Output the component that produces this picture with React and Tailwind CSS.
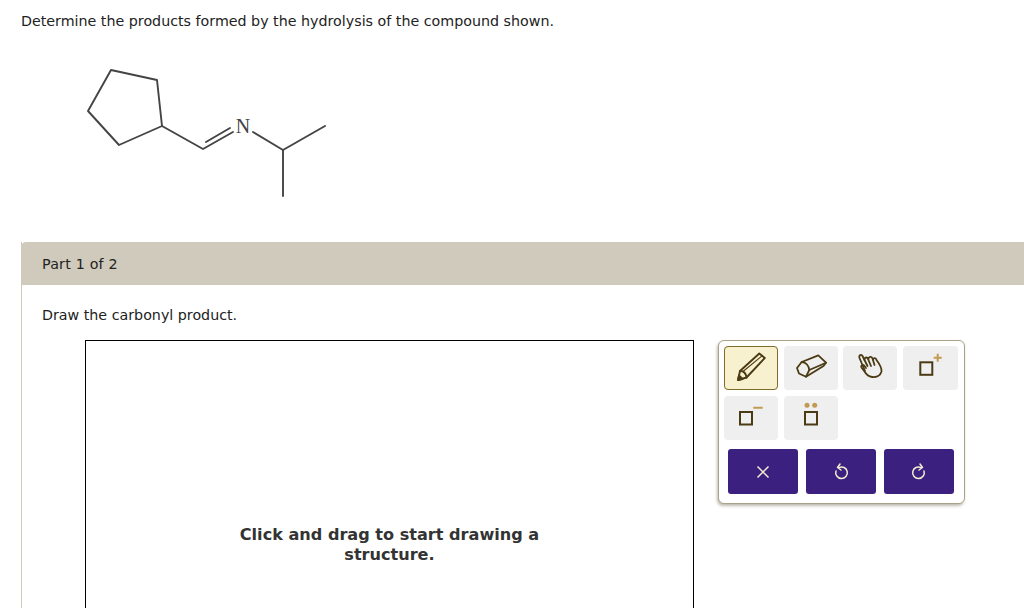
import React from 'react'

const ink = '#4b3b14'
const gold = '#c39a52'
const cream = '#f5ecd0'

function Molecule() {
  return (
    <svg width="260" height="150" viewBox="70 55 260 150" className="block">
      <g fill="none" stroke="#444" strokeWidth="1.900" strokeLinecap="round" strokeLinejoin="round">
        <path d="M111 70 157 80 162 126 119 145 88 111Z" />
        <path d="M162 126 203 149 233 132" />
        <path d="M206 142 230 128" />
        <path d="M253 132 283 150 325 126" />
        <path d="M283 150V196" />
      </g>
      <text x="243" y="133" textAnchor="middle" fontSize="20" fill="#444" fontFamily="'Liberation Serif', serif">N</text>
    </svg>
  )
}

// icons are drawn in page coordinates, the viewBox is the button's own box
const tools = [
  {
    id: 'pencil',
    active: true,
    box: '724 346 54 44',
    icon: (
      <g fill="none" stroke={ink} strokeWidth="1.900" strokeLinejoin="round" strokeLinecap="round">
        <path d="M738 380 740 371 759.300 353.500 764.800 358 746.500 377.500Z" />
        <path d="M740 371C743 371 746 373 746.500 377.500" />
        <path d="M743 371.500 762 355.800" strokeWidth="1.100" />
        <path d="M738 380 739 375.500 742.500 379Z" fill={ink} />
      </g>
    ),
  },
  {
    id: 'eraser',
    box: '784 346 54 44',
    icon: (
      <g fill="none" stroke={ink} strokeWidth="1.800" strokeLinejoin="round" strokeLinecap="round">
        <path d="M797 368 801.700 362 818.300 355.300 826 362.700 823.500 366 806 376.700 799 373.500Z" />
        <path d="M801.700 362C806 362 809 366 809.300 370L806 376.700" />
        <path d="M809.300 370 826 362.700" />
      </g>
    ),
  },
  {
    id: 'hand',
    box: '844 346 54 44',
    icon: (
      <g fill="none" stroke={ink} strokeWidth="1.800" strokeLinejoin="round" strokeLinecap="round">
        <path d="M866 371 860.500 358C859.500 355 862.500 354 863.500 356L868.500 366" />
        <path d="M865.500 360C865 357.500 868 356.500 869 359L872 366" />
        <path d="M869.500 359C869.500 356.500 872.500 356 873.500 358.500L875.500 365" />
        <path d="M874 359.500C874.500 357.500 877 357.500 877.500 360C880.500 364 883 368 882.500 371.500C881.500 375.500 877.500 377.500 873 377C869 376.500 867 374 865.500 371.500L862.500 367.500C861.500 365.500 863.500 364 865.500 366L867 368" />
      </g>
    ),
  },
  {
    id: 'plus',
    box: '903 346 55 44',
    icon: (
      <>
        <rect x="920.300" y="362.300" width="12" height="12.500" fill="none" stroke={ink} strokeWidth="2" />
        <path d="M933.700 357.700H941.700M937.700 353.700V361.700" stroke={gold} strokeWidth="2" />
      </>
    ),
  },
  {
    id: 'minus',
    box: '724 396 54 44',
    icon: (
      <>
        <rect x="740" y="412" width="12" height="12.500" fill="none" stroke={ink} strokeWidth="2" />
        <path d="M753.300 407.700H762.700" stroke={gold} strokeWidth="2" />
      </>
    ),
  },
  {
    id: 'lone-pair',
    box: '784 396 54 44',
    icon: (
      <>
        <rect x="805" y="412" width="12" height="12.500" fill="none" stroke={ink} strokeWidth="2" />
        <circle cx="807" cy="405.300" r="2.500" fill={gold} />
        <circle cx="814.700" cy="405.300" r="2.500" fill={gold} />
      </>
    ),
  },
]

const actions = [
  {
    id: 'clear',
    icon: (
      <svg width="16" height="16" viewBox="0 0 16 16" fill="none" stroke={cream} strokeWidth="1.500">
        <path d="M2.500 2.500 13.500 13.500M13.500 2.500 2.500 13.500" />
      </svg>
    ),
  },
  {
    id: 'undo',
    icon: (
      <svg width="16" height="18" viewBox="0 0 16 18" fill="none" stroke={cream} strokeWidth="1.500" strokeLinecap="round" strokeLinejoin="round">
        <path d="M6 4.500A5.800 5.800 0 1 1 3 8" />
        <path d="M7 1 4.500 4.500 8 7" />
      </svg>
    ),
  },
  {
    id: 'redo',
    icon: (
      <svg width="16" height="18" viewBox="0 0 16 18" fill="none" stroke={cream} strokeWidth="1.500" strokeLinecap="round" strokeLinejoin="round">
        <path d="M10 4.500A5.800 5.800 0 1 0 13 8" />
        <path d="M9 1 11.500 4.500 8 7" />
      </svg>
    ),
  },
]

function ToolPanel() {
  return (
    <div className="w-[247px] h-[164px] shrink-0 rounded-md border border-[#a8a288] bg-white shadow-[-1px_2px_3px_rgba(90,85,60,0.4)] p-[5px]">
      <div className="grid grid-cols-[54px_54px_54px_55px] gap-x-[5.500px] gap-y-[6px]">
        {tools.map((t) => (
          <button
            key={t.id}
            className={
              t.active
                ? 'h-[44px] rounded-[4px] outline outline-1 -outline-offset-1 outline-[#7d6c2a] bg-[#f8f1cf] overflow-hidden'
                : 'h-[44px] rounded-[4px] bg-[#efefef] overflow-hidden'
            }
          >
            <svg viewBox={t.box} className="block w-full h-full">
              {t.icon}
            </svg>
          </button>
        ))}
      </div>
      <div className="flex gap-[8px] mt-[9px] pl-[4px]">
        {actions.map((a) => (
          <button key={a.id} className="w-[70px] h-[45px] flex items-center justify-center rounded-[3px] bg-[#3b2080]">
            {a.icon}
          </button>
        ))}
      </div>
    </div>
  )
}

export default function App() {
  return (
    <div className="w-[1024px] h-[608px] overflow-hidden bg-white pl-[21px] text-[#222] font-['DejaVu_Sans',sans-serif] text-[14.250px]">
      <p className="pt-[12px] leading-[18px]">Determine the products formed by the hydrolysis of the compound shown.</p>
      <div className="mt-[25px] ml-[49px]">
        <Molecule />
      </div>
      <div className="mt-[37px] border-l border-[#d0cabc]">
        <div className="h-[43px] -ml-px flex items-center pl-[21px] pt-[3px] tracking-[0.2px] rounded-tl-[5px] bg-[#d0cabc]">Part 1 of 2</div>
        <p className="pl-[20px] pt-[21px] leading-[18px]">Draw the carbonyl product.</p>
        <div className="flex items-start gap-[24px] pl-[63px] mt-[16px]">
          <div className="w-[609px] h-[300px] shrink-0 border border-black flex justify-center">
            <p className="w-[330px] pt-[184px] text-center text-[16.100px] leading-[20px] font-bold text-[#333]">
              Click and drag to start drawing a structure.
            </p>
          </div>
          <ToolPanel />
        </div>
      </div>
    </div>
  )
}
